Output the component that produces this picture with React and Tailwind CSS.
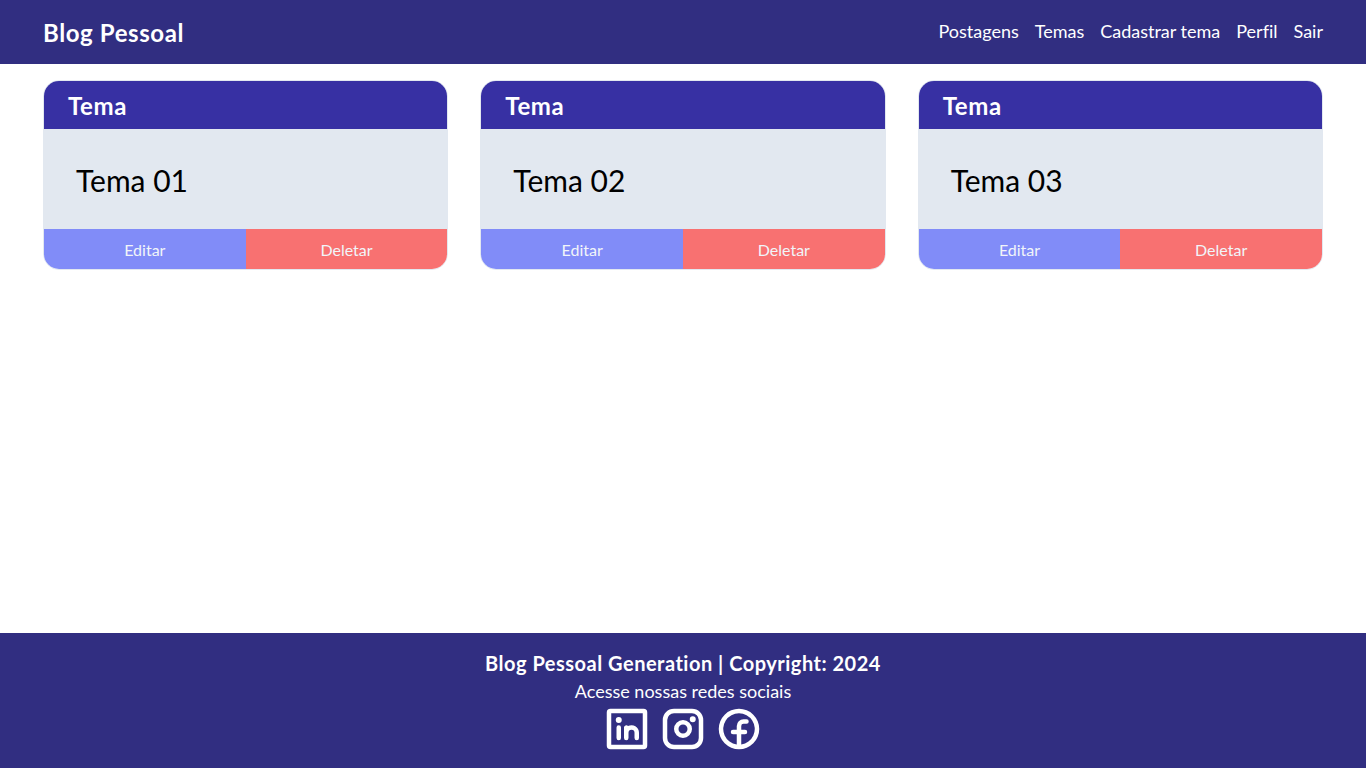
import { PiLinkedinLogoBold, PiInstagramLogoBold, PiFacebookLogoBold } from "react-icons/pi";

const temas = ["Tema 01", "Tema 02", "Tema 03"];

function Navbar() {
    return (
        <div className="w-full bg-[#312e81] text-white flex justify-center py-4 h-16">
            <div className="w-[1280px] flex justify-between items-center text-lg">
                <span className="text-2xl font-bold tracking-wide pt-0.5">Blog Pessoal</span>
                <div className="flex gap-4 pb-0.5 [font-variant-ligatures:none]">
                    <span>Postagens</span>
                    <span>Temas</span>
                    <span>Cadastrar tema</span>
                    <span>Perfil</span>
                    <span>Sair</span>
                </div>
            </div>
        </div>
    );
}

function CardTema({ nome }) {
    return (
        <div className="border border-slate-200 flex flex-col rounded-2xl overflow-hidden justify-between">
            <header className="pt-[9px] pb-[7px] px-6 bg-[#3730a3] text-white font-bold tracking-wide text-2xl leading-8">Tema</header>
            <p className="pt-[33px] pb-[31px] px-8 text-3xl leading-9 bg-slate-200 h-full text-black">{nome}</p>
            <div className="flex">
                <button className="w-full text-slate-100 bg-[#818cf8] flex items-center justify-center pt-[9px] pb-[7px]">Editar</button>
                <button className="w-full text-slate-100 bg-[#f87171] flex items-center justify-center pt-[9px] pb-[7px]">Deletar</button>
            </div>
        </div>
    );
}

function Footer() {
    return (
        <div className="flex justify-center bg-[#312e81] text-white">
            <div className="w-[1280px] flex flex-col items-center pt-4 pb-[15px]">
                <p className="text-xl leading-7 font-bold tracking-wide">Blog Pessoal Generation | Copyright: 2024</p>
                <p className="text-lg leading-7">Acesse nossas redes sociais</p>
                <div className="flex gap-2">
                    <PiLinkedinLogoBold size={48} />
                    <PiInstagramLogoBold size={48} />
                    <PiFacebookLogoBold size={48} />
                </div>
            </div>
        </div>
    );
}

export default function App() {
    return (
        <div className="h-screen flex flex-col font-['Lato',sans-serif]">
            <Navbar />
            <main className="flex-1">
                <div className="w-[1280px] mx-auto grid grid-cols-3 gap-8 my-4">
                    {temas.map((t) => (
                        <CardTema key={t} nome={t} />
                    ))}
                </div>
            </main>
            <Footer />
        </div>
    );
}
